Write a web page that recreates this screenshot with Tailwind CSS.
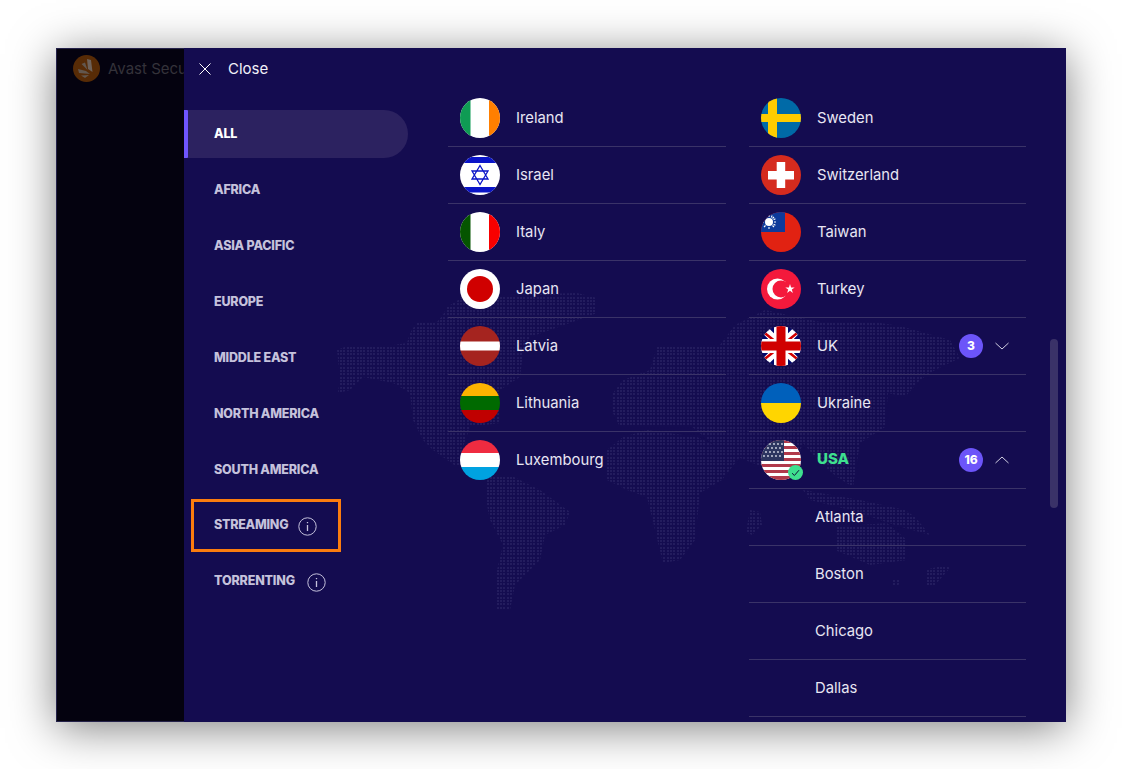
<!DOCTYPE html>
<html>
<head>
<meta charset="utf-8">
<script src="https://cdn.jsdelivr.net/npm/@tailwindcss/browser@4"></script>
</head>
<body class="bg-white w-[1122px] h-[769px] overflow-hidden font-['Inter',sans-serif]">
<div class="pt-[48px] pl-[56px]">
<div class="flex w-[1010px] h-[674px] shadow-[0_6px_42px_rgba(0,0,0,0.5)] outline outline-1 -outline-offset-1 outline-[#242149] overflow-hidden">
  <!-- dimmed app behind -->
  <div class="w-[128px] shrink-0 bg-[#04020f] overflow-hidden">
    <div class="flex items-center gap-2 pl-[17px] pt-[7px] whitespace-nowrap">
      <svg width="27" height="27" viewBox="0 0 27 27" class="shrink-0">
        <circle cx="13.5" cy="13.5" r="13.5" fill="#572b06"/>
        <path d="M14 4 L18 5 L19.5 17 L15 14 Z" fill="#6e625a"/>
        <path d="M8.5 9 L12 7.5 L14.5 15 Z" fill="#62574e"/>
        <path d="M5 14 L13 16 L17 19 L6 18 Z" fill="#62574e"/>
        <path d="M8 20.5 L16 20 L12 23 Z" fill="#62574e"/>
      </svg>
      <span class="text-[15px] text-[#34323a] pt-[2px]">Avast Security</span>
    </div>
  </div>
  <!-- panel -->
  <div class="relative flex-1 bg-[#140c50] overflow-hidden">
    <!-- world map -->
    <svg class="absolute left-0 top-0" width="882" height="674" viewBox="184 48 882 674">
      <defs>
        <pattern id="dots" x="0" y="0" width="10" height="10" patternUnits="userSpaceOnUse">
          <g fill="#231c5e" shape-rendering="crispEdges">
            <rect x="0" y="0" width="2" height="2"/><rect x="3" y="0" width="2" height="2"/><rect x="7" y="0" width="2" height="2"/>
            <rect x="0" y="3" width="2" height="2"/><rect x="3" y="3" width="2" height="2"/><rect x="7" y="3" width="2" height="2"/>
            <rect x="0" y="7" width="2" height="2"/><rect x="3" y="7" width="2" height="2"/><rect x="7" y="7" width="2" height="2"/>
          </g>
        </pattern>
      </defs>
      <g fill="url(#dots)">
        <polygon points="337,350 350,345 380,347 407,343 410,333 417,322 437,322 443,315 447,307 463,297 507,295 577,293 597,298 597,313 570,323 530,337 523,353 520,377 500,390 500,423 470,427 463,447 477,467 457,467 433,450 423,440 413,420 410,393 393,383 363,377 350,390 338,393 340,377"/>
        <polygon points="487,477 510,475 540,490 570,512 565,525 545,535 540,560 515,585 510,610 497,610 497,570 503,545 490,520 486,500"/>
        <polygon points="613,393 623,380 650,370 657,347 680,345 720,345 735,325 765,310 820,322 880,323 900,326 950,340 960,358 935,370 920,380 905,397 888,393 885,427 860,443 853,487 837,477 820,463 803,443 790,480 770,470 745,460 720,450 690,425 655,427 620,427 613,413"/>
        <polygon points="607,450 623,437 647,430 697,437 740,457 722,480 700,493 695,540 680,560 663,563 647,497 627,490 607,480"/>
        <polygon points="803,490 860,500 905,510 915,517 930,535 895,525 850,510 810,500"/>
        <polygon points="835,527 887,523 907,540 907,560 870,565 835,550"/>
        <polygon points="925,570 945,565 950,568 935,585 927,586"/>
        <polygon points="893,580 900,580 898,587 892,587"/>
        <polygon points="750,510 760,512 762,525 752,535 746,532"/>
      </g>
    </svg>

    <!-- header -->
    <div class="relative h-[42px] flex items-center pl-[15px] gap-[17px] text-white">
      <svg width="12" height="12" viewBox="0 0 12 12" fill="none" stroke="#fff" stroke-width="1"><path d="M0.5 0.5 L11.5 11.5 M11.5 0.5 L0.5 11.5"/></svg>
      <span class="text-[15px] text-[#f2f1f8]">Close</span>
    </div>

    <div class="relative flex">
      <!-- categories -->
      <div class="w-[224px] shrink-0 pt-[20px] text-[12.5px] font-extrabold tracking-[-0.2px] text-[#c5c2dc]">
        <div class="h-12 mb-2 flex items-center pl-[30px] rounded-r-[24px] bg-[#2c2260] text-white relative">
          <span class="absolute left-0 top-0 h-12 w-1 rounded-r-[1px] bg-[#6f55ff]"></span>ALL
        </div>
        <div class="h-12 mb-2 flex items-center pl-[30px]">AFRICA</div>
        <div class="h-12 mb-2 flex items-center pl-[30px]">ASIA PACIFIC</div>
        <div class="h-12 mb-2 flex items-center pl-[30px]">EUROPE</div>
        <div class="h-12 mb-2 flex items-center pl-[30px]">MIDDLE EAST</div>
        <div class="h-12 mb-2 flex items-center pl-[30px]">NORTH AMERICA</div>
        <div class="h-12 mb-2 flex items-center pl-[30px]">SOUTH AMERICA</div>
        <div class="relative h-12 mb-2 flex items-center pl-[30px] gap-[10px]">
          <span class="mb-[2px] tracking-[-0.25px]">STREAMING</span>
          <svg width="19" height="19" viewBox="0 0 19 19" fill="none" stroke="#c5c2dc"><circle cx="9.5" cy="9.5" r="8.7"/><path d="M9.5 8 V14" stroke-width="1.3"/><path d="M9.5 5 V6.2" stroke-width="1.3"/></svg>
          <span class="absolute left-[7px] top-[-3px] w-[150px] h-[53px] border-[3px] border-[#fb7d0e]"></span>
        </div>
        <div class="h-12 mb-2 flex items-center pl-[30px] gap-[12px]">
          <span class="mb-[2px] tracking-[-0.15px]">TORRENTING</span>
          <svg width="19" height="19" viewBox="0 0 19 19" fill="none" stroke="#c5c2dc"><circle cx="9.5" cy="9.5" r="8.7"/><path d="M9.5 8 V14" stroke-width="1.3"/><path d="M9.5 5 V6.2" stroke-width="1.3"/></svg>
        </div>
      </div>

      <!-- left column -->
      <div class="ml-[40px] w-[278px] shrink-0 text-[14.8px] text-[#e8e6f3]">
        <div class="h-[57px] flex items-center gap-4 pl-3 border-b border-[#3a3368]">
          <svg width="40" height="40" viewBox="0 0 40 40" class="rounded-full shrink-0"><rect width="40" height="40" fill="#fff"/><rect width="10.5" height="40" fill="#0f9b54"/><rect x="29" width="11" height="40" fill="#ff7f00"/></svg>
          <span>Ireland</span>
        </div>
        <div class="h-[57px] flex items-center gap-4 pl-3 border-b border-[#3a3368]">
          <svg width="40" height="40" viewBox="0 0 40 40" class="rounded-full shrink-0"><rect width="40" height="40" fill="#fff"/><rect y="2" width="40" height="6" fill="#0a14c8"/><rect y="32" width="40" height="5.5" fill="#0a14c8"/><path d="M20 10.5 L28 24 H12 Z M20 29.5 L12 16 H28 Z" fill="none" stroke="#0a14c8" stroke-width="1.3"/></svg>
          <span>Israel</span>
        </div>
        <div class="h-[57px] flex items-center gap-4 pl-3 border-b border-[#3a3368]">
          <svg width="40" height="40" viewBox="0 0 40 40" class="rounded-full shrink-0"><rect width="40" height="40" fill="#fff"/><rect width="10.5" height="40" fill="#055500"/><rect x="29" width="11" height="40" fill="#f80000"/></svg>
          <span>Italy</span>
        </div>
        <div class="h-[57px] flex items-center gap-4 pl-3 border-b border-[#3a3368]">
          <svg width="40" height="40" viewBox="0 0 40 40" class="rounded-full shrink-0"><rect width="40" height="40" fill="#fff"/><circle cx="20" cy="20" r="13" fill="#d00000"/></svg>
          <span>Japan</span>
        </div>
        <div class="h-[57px] flex items-center gap-4 pl-3 border-b border-[#3a3368]">
          <svg width="40" height="40" viewBox="0 0 40 40" class="rounded-full shrink-0"><rect width="40" height="40" fill="#a5241f"/><rect y="15.5" width="40" height="9" fill="#fff"/></svg>
          <span>Latvia</span>
        </div>
        <div class="h-[57px] flex items-center gap-4 pl-3 border-b border-[#3a3368]">
          <svg width="40" height="40" viewBox="0 0 40 40" class="rounded-full shrink-0"><rect width="40" height="13" fill="#fdb300"/><rect y="13" width="40" height="14" fill="#006a00"/><rect y="27" width="40" height="13" fill="#c00000"/></svg>
          <span>Lithuania</span>
        </div>
        <div class="h-[57px] flex items-center gap-4 pl-3 border-b border-transparent">
          <svg width="40" height="40" viewBox="0 0 40 40" class="rounded-full shrink-0"><rect width="40" height="13" fill="#ef2b40"/><rect y="13" width="40" height="14" fill="#fff"/><rect y="27" width="40" height="13" fill="#00a2e1"/></svg>
          <span>Luxembourg</span>
        </div>
      </div>

      <!-- right column -->
      <div class="ml-[23px] w-[277px] shrink-0 text-[14.8px] text-[#e8e6f3]">
        <div class="h-[57px] flex items-center gap-4 pl-3 border-b border-[#3a3368]">
          <svg width="40" height="40" viewBox="0 0 40 40" class="rounded-full shrink-0"><rect width="40" height="40" fill="#006aa7"/><rect x="7" width="9" height="40" fill="#fecc00"/><rect y="16" width="40" height="8" fill="#fecc00"/></svg>
          <span>Sweden</span>
        </div>
        <div class="h-[57px] flex items-center gap-4 pl-3 border-b border-[#3a3368]">
          <svg width="40" height="40" viewBox="0 0 40 40" class="rounded-full shrink-0"><rect width="40" height="40" fill="#d52b1e"/><rect x="7" y="16" width="26" height="8.5" fill="#fff"/><rect x="15.7" y="7" width="8.5" height="26" fill="#fff"/></svg>
          <span>Switzerland</span>
        </div>
        <div class="h-[57px] flex items-center gap-4 pl-3 border-b border-[#3a3368]">
          <svg width="40" height="40" viewBox="0 0 40 40" class="rounded-full shrink-0"><rect width="40" height="40" fill="#e12212"/><rect width="24" height="20" fill="#0d3a9a"/><circle cx="8" cy="10" r="4" fill="#fff"/><g stroke="#fff" stroke-width="1.1"><path d="M8 3 V5 M8 15 V17 M1 10 H3 M13 10 H15 M3 5 L4.5 6.5 M13 5 L11.5 6.5 M3 15 L4.5 13.5 M13 15 L11.5 13.5 M4.8 3.6 L5.8 5.4 M11.2 3.6 L10.2 5.4 M14.4 6.8 L12.6 7.8 M14.4 13.2 L12.6 12.2"/></g></svg>
          <span>Taiwan</span>
        </div>
        <div class="h-[57px] flex items-center gap-4 pl-3 border-b border-[#3a3368]">
          <svg width="40" height="40" viewBox="0 0 40 40" class="rounded-full shrink-0"><rect width="40" height="40" fill="#f4193c"/><circle cx="16.5" cy="20" r="10.5" fill="#fff"/><circle cx="20" cy="20" r="8.5" fill="#f4193c"/><path d="M29 15 L30.1 18.4 H33.7 L30.8 20.5 L31.9 23.9 L29 21.8 L26.1 23.9 L27.2 20.5 L24.3 18.4 H27.9 Z" fill="#fff"/></svg>
          <span>Turkey</span>
        </div>
        <div class="h-[57px] flex items-center pl-3 border-b border-[#3a3368]">
          <svg width="40" height="40" viewBox="0 0 40 40" class="rounded-full shrink-0"><rect width="40" height="40" fill="#00076b"/><path d="M0 0 L40 40 M40 0 L0 40" stroke="#fff" stroke-width="8"/><path d="M0 4 L15 16 M40 36 L25 24 M40 4 L25 16 M0 36 L15 24" stroke="#d00000" stroke-width="2.5"/><rect x="13" width="14" height="40" fill="#fff"/><rect y="13" width="40" height="14" fill="#fff"/><rect x="15.5" width="9" height="40" fill="#d00000"/><rect y="15.5" width="40" height="9" fill="#d00000"/></svg>
          <span class="ml-4">UK</span>
          <span class="ml-auto w-6 h-6 rounded-full bg-[#6c55f9] flex items-center justify-center text-[12px] font-extrabold text-white">3</span>
          <svg class="ml-3 mr-[17px]" width="14" height="8" viewBox="0 0 14 8" fill="none" stroke="#e8e6f3" stroke-width="0.9"><path d="M0.5 1 L7 7 L13.5 1"/></svg>
        </div>
        <div class="h-[57px] flex items-center gap-4 pl-3 border-b border-[#3a3368]">
          <svg width="40" height="40" viewBox="0 0 40 40" class="rounded-full shrink-0"><rect width="40" height="20" fill="#0060bb"/><rect y="20" width="40" height="20" fill="#ffd500"/></svg>
          <span>Ukraine</span>
        </div>
        <div class="h-[57px] flex items-center pl-3 border-b border-[#3a3368]">
          <div class="relative w-10 h-10 shrink-0">
            <svg width="40" height="40" viewBox="0 0 40 40" class="rounded-full">
              <rect width="40" height="40" fill="#fff"/>
              <g fill="#b13a4b"><rect y="0" width="40" height="3"/><rect y="6" width="40" height="3"/><rect y="12" width="40" height="3"/><rect y="18" width="40" height="3"/><rect y="24" width="40" height="3"/><rect y="30" width="40" height="3"/><rect y="36" width="40" height="4"/></g>
              <rect width="23" height="21" fill="#2d3660"/>
              <g fill="#d9dbe8"><circle cx="5" cy="4" r="0.9"/><circle cx="9" cy="4" r="0.9"/><circle cx="13" cy="4" r="0.9"/><circle cx="17" cy="4" r="0.9"/><circle cx="21" cy="4" r="0.9"/><circle cx="3" cy="8" r="0.9"/><circle cx="7" cy="8" r="0.9"/><circle cx="11" cy="8" r="0.9"/><circle cx="15" cy="8" r="0.9"/><circle cx="19" cy="8" r="0.9"/><circle cx="5" cy="12" r="0.9"/><circle cx="9" cy="12" r="0.9"/><circle cx="13" cy="12" r="0.9"/><circle cx="17" cy="12" r="0.9"/><circle cx="21" cy="12" r="0.9"/><circle cx="3" cy="16" r="0.9"/><circle cx="7" cy="16" r="0.9"/><circle cx="11" cy="16" r="0.9"/><circle cx="15" cy="16" r="0.9"/><circle cx="19" cy="16" r="0.9"/></g>
            </svg>
            <span class="absolute left-[27px] top-[25px] w-[15px] h-[15px] rounded-full bg-[#3ee08f] flex items-center justify-center">
              <svg width="9" height="8" viewBox="0 0 9 8" fill="none" stroke="#10133a" stroke-width="1"><path d="M1 4.2 L3.4 6.5 L8 1.2"/></svg>
            </span>
          </div>
          <span class="ml-4 mb-[2px] font-extrabold text-[15px] text-[#3ee08f]">USA</span>
          <span class="ml-auto w-6 h-6 rounded-full bg-[#6c55f9] flex items-center justify-center text-[12px] font-extrabold text-white">16</span>
          <svg class="ml-3 mr-[17px]" width="14" height="8" viewBox="0 0 14 8" fill="none" stroke="#e8e6f3" stroke-width="0.9"><path d="M0.5 7 L7 1 L13.5 7"/></svg>
        </div>
        <div class="h-[57px] flex items-center pl-[66px] border-b border-[#3a3368]">Atlanta</div>
        <div class="h-[57px] flex items-center pl-[66px] border-b border-[#3a3368]">Boston</div>
        <div class="h-[57px] flex items-center pl-[66px] border-b border-[#3a3368]">Chicago</div>
        <div class="h-[57px] flex items-center pl-[66px] border-b border-[#3a3368]">Dallas</div>
      </div>
    </div>

    <!-- scrollbar -->
    <div class="absolute left-[866px] top-[291px] w-2 h-[169px] rounded-full bg-[#3a3268]"></div>
  </div>
</div>
</div>
</body>
</html>
